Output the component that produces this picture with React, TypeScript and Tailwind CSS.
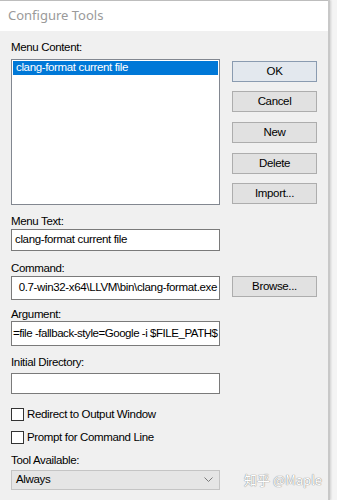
import React from 'react';

const font = { fontFamily: '"Liberation Sans", Arial, sans-serif' };
const txt = 'text-[11.5px] tracking-[-0.35px]';

const Label: React.FC<{ text: string; className?: string }> = ({ text, className }) => (
  <div className={`h-[14px] ${txt} leading-[14px] text-black ${className ?? ''}`}>{text}</div>
);

const Field: React.FC<{ value?: string; className?: string }> = ({ value, className }) => (
  <div
    className={`flex items-center overflow-hidden whitespace-nowrap border border-[#7a7a7a] bg-white ${txt} text-black ${
      className ?? ''
    }`}
  >
    {value}
  </div>
);

const Button: React.FC<{ label: string; primary?: boolean; className?: string }> = ({ label, primary, className }) => (
  <div
    className={`flex h-[21px] w-[85px] items-center justify-center border ${txt} text-black ${
      primary ? 'border-[#8a9bb0] bg-[#e3e8ee]' : 'border-[#adadad] bg-[#e1e1e1]'
    } ${className ?? ''}`}
  >
    {label}
  </div>
);

const Check: React.FC<{ label: string; className?: string }> = ({ label, className }) => (
  <div className={`flex items-center gap-[3px] ${className ?? ''}`}>
    <div className="h-[13px] w-[13px] border border-[#333] bg-white" />
    <span className={`${txt} leading-[14px] text-black`}>{label}</span>
  </div>
);

export default function App() {
  return (
    <div className="relative h-[500px] w-[337px] overflow-hidden bg-[#f4f4f4]" style={font}>
      <div className="h-[500px] w-[330px] border-r-2 border-[#c8c8c8] bg-[#f0f0f0] shadow-[1px_0_2px_rgba(0,0,0,0.15)]">
        {/* title bar */}
        <div className="flex h-[31px] items-center border-t border-[#bdbdbd] bg-white pl-[8px]">
          <span className="text-[13px] text-[#9a9a9a]" style={{ fontFamily: '"Noto Sans", "Open Sans", sans-serif' }}>
            Configure Tools
          </span>
        </div>

        <div className="flex">
          {/* left column */}
          <div className="ml-[11px] flex w-[209px] flex-col">
            <Label text="Menu Content:" className="mt-[9px]" />
            <div className="mt-[5px] h-[146px] border border-[#828790] bg-white p-[1px]">
              <div className={`flex h-[14px] items-center bg-[#0078d7] pl-[3px] ${txt} text-white`}>
                clang-format current file
              </div>
            </div>

            <Label text="Menu Text:" className="mt-[9px]" />
            <Field value="clang-format current file" className="mt-[1px] h-[22px] px-[3px]" />

            <Label text="Command:" className="mt-[10px]" />
            <Field value="0.7-win32-x64\LLVM\bin\clang-format.exe" className="mt-[1px] h-[24px] justify-end pr-[2px]" />

            <Label text="Argument:" className="mt-[7px]" />
            <Field
              value="=file -fallback-style=Google -i $FILE_PATH$"
              className="mt-[0px] h-[25px] justify-start pl-[1px] tracking-[-0.45px]"
            />

            <Label text="Initial Directory:" className="mt-[9px]" />
            <Field className="mt-[4px] h-[21px]" />

            <Check label="Redirect to Output Window" className="mt-[13px]" />
            <Check label="Prompt for Command Line" className="mt-[9px]" />

            <Label text="Tool Available:" className="mt-[9px]" />
            <div className={`mt-[3px] flex h-[20px] items-center justify-between border border-[#c4c4c4] bg-[#e5e5e5] pl-[4px] pr-[6px] ${txt} text-black`}>
              <span>Always</span>
              <svg width="9" height="6" viewBox="0 0 9 6" fill="none">
                <path d="M0.5 0.5 L4.5 4.5 L8.5 0.5" stroke="#7a7a7a" strokeWidth="1" />
              </svg>
            </div>
          </div>

          {/* right column */}
          <div className="ml-[12px] flex flex-col">
            <Button label="OK" primary className="mt-[30px]" />
            <Button label="Cancel" className="mt-[9px]" />
            <Button label="New" className="mt-[10px]" />
            <Button label="Delete" className="mt-[10px]" />
            <Button label="Import..." className="mt-[9px]" />
            <Button label="Browse..." className="mt-[72px]" />
          </div>
        </div>
      </div>

      <div
        className="absolute left-[244px] top-[470px] text-[13px] text-white"
        style={{
          fontFamily: '"Noto Sans CJK SC", "Noto Sans", sans-serif',
          textShadow: '0 0 1px #888, 0 0 1px #888',
        }}
      >
        知乎 @Maple
      </div>
    </div>
  );
}
